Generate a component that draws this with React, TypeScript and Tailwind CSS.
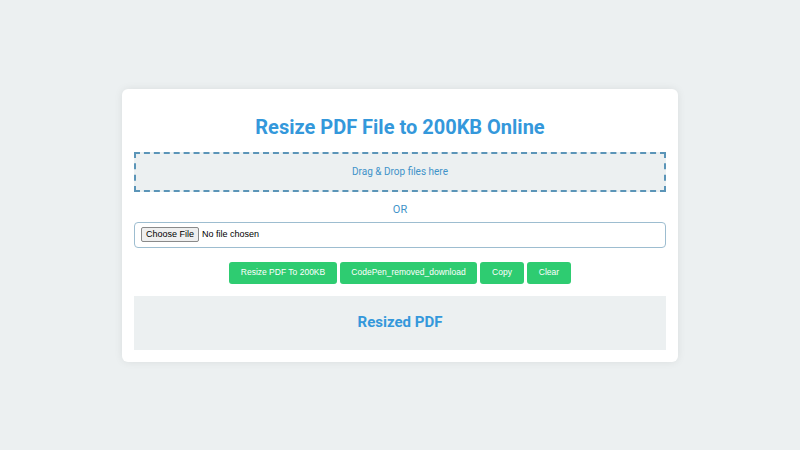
export default function App() {
  return (
    <div className="flex min-h-screen items-center justify-center bg-[#ecf0f1] font-['Roboto',sans-serif]">
      <div className="w-[556px] rounded-[6px] bg-white p-3 shadow-[0_0_8px_rgba(0,0,0,0.08)]">
        <h1 className="mb-[12px] mt-[13px] text-center text-[20px] font-bold leading-[26px] text-[#3498db]">
          Resize PDF File to 200KB Online
        </h1>
        <div className="flex h-[40px] items-center justify-center border-2 border-dashed border-[#5b95b8] bg-[#ecf0f1] text-[10px] text-[#3f93c9]">
          Drag &amp; Drop files here
        </div>
        <p className="mb-[4px] mt-[10px] text-center text-[11px] leading-[16px] text-[#3f93c9]">OR</p>
        <div className="flex h-[26px] items-center rounded-[4px] border border-[#9dbdd0] px-[6px]">
          <input type="file" className="font-['Liberation_Sans',sans-serif] text-[9px] text-black file:mr-[3px] file:rounded-[2px] file:border file:border-[#8a8a8a] file:bg-[#efefef] file:px-[4px] file:py-0 file:text-[9px]" />
        </div>
        <div className="mt-[14px] flex justify-center gap-[3px] font-['Liberation_Sans',sans-serif] text-[8.5px] text-white">
          <button className="h-[22px] w-[108px] rounded-[3px] bg-[#2ecc71]">Resize PDF To 200KB</button>
          <button className="h-[22px] w-[137px] rounded-[3px] bg-[#2ecc71]">CodePen_removed_download</button>
          <button className="h-[22px] w-[44px] rounded-[3px] bg-[#2ecc71]">Copy</button>
          <button className="h-[22px] w-[44px] rounded-[3px] bg-[#2ecc71]">Clear</button>
        </div>
        <div className="mt-[12px] flex h-[54px] items-center justify-center bg-[#ecf0f1]">
          <h2 className="text-[15px] font-bold text-[#3498db]">Resized PDF</h2>
        </div>
      </div>
    </div>
  )
}
